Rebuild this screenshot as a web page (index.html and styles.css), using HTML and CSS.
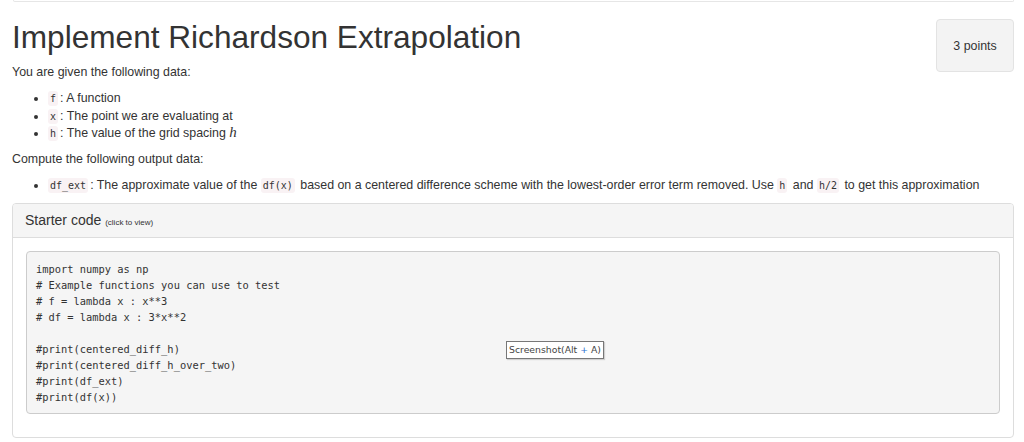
FILE: index.html
```html
<!DOCTYPE html>
<html>
<head>
<meta charset="utf-8">
<link rel="stylesheet" href="styles.css">
</head>
<body>
<div class="page">
  <div class="prev-card"></div>
  <div class="title-row">
    <h1 class="title">Implement Richardson Extrapolation</h1>
    <div class="points">3 points</div>
  </div>
  <p class="para first">You are given the following data:</p>
  <ul class="list">
    <li><code class="ic">f</code>: A function</li>
    <li><code class="ic">x</code>: The point we are evaluating at</li>
    <li><code class="ic">h</code>: The value of the grid spacing <span class="math">h</span></li>
  </ul>
  <p class="para">Compute the following output data:</p>
  <ul class="list">
    <li><code class="ic">df_ext</code>: The approximate value of the <code class="ic">df(x)</code> based on a centered difference scheme with the lowest-order error term removed. Use <code class="ic">h</code> and <code class="ic">h/2</code> to get this approximation</li>
  </ul>
  <div class="panel">
    <div class="panel-head">Starter code <span class="small">(click to view)</span></div>
    <div class="panel-body">
<pre class="code">import numpy as np
# Example functions you can use to test
# f = lambda x : x**3
# df = lambda x : 3*x**2

#print(centered_diff_h)
#print(centered_diff_h_over_two)
#print(df_ext)
#print(df(x))</pre>
    </div>
  </div>
</div>
<div class="shot-tip">Screenshot(Alt <span class="plus">+</span> A)</div>
</body>
</html>
```
FILE: styles.css
```css
html, body {
  margin: 0;
  padding: 0;
  background: #fff;
}
body {
  font-family: "Liberation Sans", Arial, sans-serif;
  font-size: 12.4px;
  color: #333;
  position: relative;
}
.page {
  padding: 0 10px 0 12px;
}
.prev-card {
  height: 1px;
  margin-left: 1px;
  border: 1px solid #e6e6e6;
  border-top: none;
  border-radius: 0 0 4px 4px;
}
.title-row {
  display: flex;
  justify-content: space-between;
  align-items: flex-start;
}
.title {
  margin: 17px 0 0 0;
  font-size: 31.6px;
  font-weight: 400;
  line-height: 36px;
  color: #333;
}
.points {
  margin-top: 17px;
  width: 76px;
  height: 51px;
  background: #f3f3f3;
  border: 1px solid #e3e3e3;
  border-radius: 4px;
  display: flex;
  align-items: center;
  justify-content: center;
  font-size: 12.4px;
  color: #333;
}
.para {
  margin: 0 0 9px 0;
  line-height: 18px;
}
.para.first {
  margin-top: -9px;
}
.list {
  margin: 0 0 7px 0;
  padding-left: 36px;
  line-height: 17.5px;
}
.ic {
  font-family: "DejaVu Sans Mono", "Liberation Mono", monospace;
  font-size: 10px;
  background: #f9f2f4;
  color: #333;
  padding: 2px 2px;
  border-radius: 3px;
  margin-right: 2px;
}
.math {
  font-family: "Liberation Serif", serif;
  font-style: italic;
  font-size: 15px;
  line-height: 1;
}
.panel {
  margin-top: 9px;
  border: 1px solid #ddd;
  border-radius: 4px;
}
.panel-head {
  background: #f5f5f5;
  border-bottom: 1px solid #ddd;
  border-radius: 3px 3px 0 0;
  padding: 0 12px;
  height: 33px;
  line-height: 33px;
  font-size: 14px;
  color: #333;
}
.small {
  font-size: 8px;
}
.panel-body {
  padding: 13px 13px 13px 13px;
}
.code {
  margin: 0 0 10px 0;
  background: #f5f5f5;
  border: 1px solid #ccc;
  border-radius: 4px;
  padding: 9px 9px 8px 9px;
  font-family: "DejaVu Sans Mono", "Liberation Mono", monospace;
  font-size: 10.4px;
  line-height: 16px;
  color: #333;
}
.shot-tip {
  position: absolute;
  left: 506px;
  top: 341px;
  background: #fff;
  border: 1px solid #777;
  padding: 0 2px;
  height: 16px;
  line-height: 16px;
  font-family: "DejaVu Sans", sans-serif;
  font-size: 9.3px;
  color: #444;
  box-shadow: 1px 1px 1px rgba(0,0,0,0.15);
}
.plus {
  color: #2a6fd0;
}
```
